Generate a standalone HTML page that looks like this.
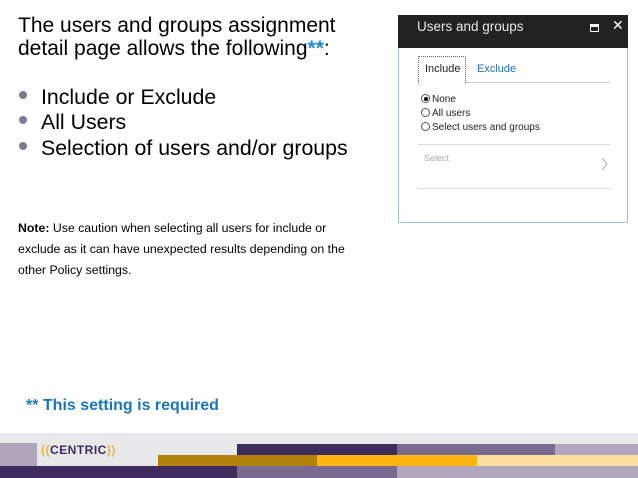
<!DOCTYPE html>
<html><head><style>
*{margin:0;padding:0;box-sizing:border-box}
body{width:638px;height:478px;background:#fff;position:relative;overflow:hidden;font-family:"Liberation Sans",Arial,sans-serif;color:#000}
.a{position:absolute;white-space:nowrap}
.t{font-size:21px;line-height:23px}
.b{font-size:21.3px;line-height:25.5px}
.dot{position:absolute;width:8px;height:8px;border-radius:50%;background:#7e7890}
.n{font-size:12.3px;line-height:21px}
.r{position:absolute;width:9px;height:9px;border:1px solid #555;border-radius:50%;background:#fff}
.pt{font-family:"Liberation Sans",sans-serif;font-size:10px;color:#222}
</style></head><body>
<div class="a t" style="left:18px;top:14px">The users and groups assignment<br>detail page allows the following<span style="color:#1c8ad6;font-weight:bold">**</span>:</div>
<div class="dot" style="left:19px;top:91px"></div>
<div class="dot" style="left:19px;top:116px"></div>
<div class="dot" style="left:19px;top:142px"></div>
<div class="a b" style="left:41px;top:85px">Include or Exclude</div>
<div class="a b" style="left:41px;top:110px">All Users</div>
<div class="a b" style="left:41px;top:136px">Selection of users and/or groups</div>
<div class="a n" style="left:18px;top:218px"><b>Note:</b> Use caution when selecting all users for include or<br>exclude as it can have unexpected results depending on the<br>other Policy settings.</div>
<div class="a" style="left:26px;top:397px;font-size:16px;font-weight:bold;color:#1c75bc">** This setting is required</div>

<div class="a" style="left:398px;top:15px;width:230px;height:208px;border:1px solid #9cc3e3;background:#fff"></div>
<div class="a" style="left:398px;top:15px;width:230px;height:33px;background:#222"></div>
<div class="a" style="left:417px;top:19px;font-size:13.5px;color:#e8e8e8">Users and groups</div>
<div class="a" style="left:590px;top:24px;width:9px;height:8px;border:1px solid #fff;border-top:3px solid #fff"></div>
<div class="a" style="left:612px;top:18px;color:#fff;font-size:14px;font-family:'DejaVu Sans',sans-serif">✕</div>
<div class="a" style="left:418px;top:56px;width:48px;height:27px;border:1px dotted #666;border-bottom:none;background:#fff"></div>
<div class="a" style="left:466px;top:82px;width:144px;height:1px;background:#ccc"></div>
<div class="a" style="left:425px;top:63px;font-size:11px;color:#222">Include</div>
<div class="a" style="left:477px;top:63px;font-size:11px;color:#1e6fb8">Exclude</div>
<div class="r" style="left:421px;top:94px"></div><div class="a" style="left:423.5px;top:96.5px;width:4px;height:4px;border-radius:50%;background:#000"></div>
<div class="r" style="left:421px;top:108px"></div>
<div class="r" style="left:421px;top:122px"></div>
<div class="a pt" style="left:432px;top:94px">None</div>
<div class="a pt" style="left:432px;top:108px">All users</div>
<div class="a pt" style="left:432px;top:122px">Select users and groups</div>
<div class="a" style="left:418px;top:144px;width:192px;height:1px;background:#ddd"></div>
<div class="a" style="left:424px;top:153px;font-size:9px;color:#aaa">Select</div>
<svg class="a" style="left:601px;top:157px" width="8" height="14"><path d="M1 1L6 7L1 13" stroke="#aaa" fill="none"/></svg>
<div class="a" style="left:418px;top:188px;width:192px;height:1px;background:#ddd"></div>

<div class="a" style="left:0;top:433px;width:638px;height:34px;background:#e8e7ea"></div>
<div class="a" style="left:0;top:443px;width:37px;height:24px;background:#aea6b8"></div>
<div class="a" style="left:41px;top:443px;font-size:12px;font-weight:bold;color:#3e2c5e;letter-spacing:0.5px"><span style="color:#f2b53a">((</span>CENTRIC<span style="color:#f2b53a">))</span></div>
<div class="a" style="left:237px;top:444px;width:160px;height:11px;background:#3e2c5e"></div>
<div class="a" style="left:397px;top:444px;width:158px;height:11px;background:#796b8f"></div>
<div class="a" style="left:555px;top:444px;width:83px;height:11px;background:#b0a7bd"></div>
<div class="a" style="left:158px;top:455px;width:159px;height:11px;background:#b0820c"></div>
<div class="a" style="left:317px;top:455px;width:160px;height:11px;background:#fdb515"></div>
<div class="a" style="left:477px;top:455px;width:161px;height:11px;background:#fddea0"></div>
<div class="a" style="left:0;top:466px;width:237px;height:12px;background:#3e2c5e"></div>
<div class="a" style="left:237px;top:466px;width:160px;height:12px;background:#796b8f"></div>
<div class="a" style="left:397px;top:466px;width:241px;height:12px;background:#b0a7bd"></div>
</body></html>
